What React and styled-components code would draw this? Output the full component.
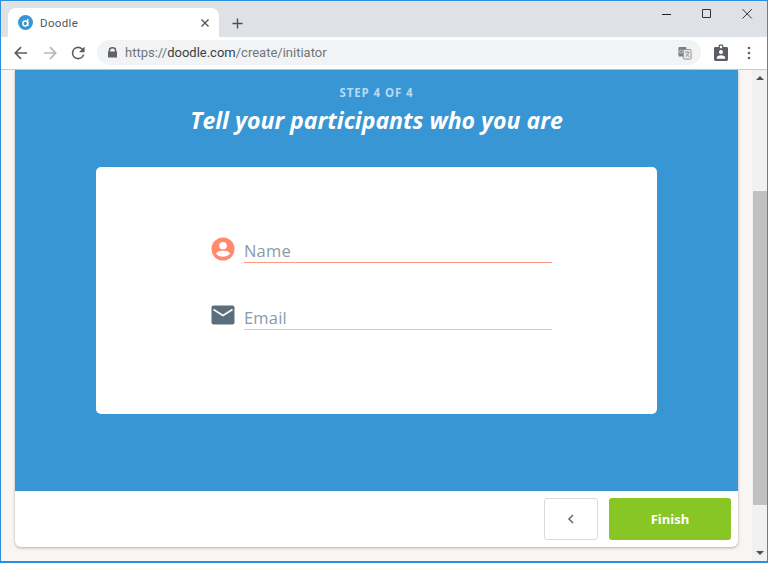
import React from 'react';
import styled, { createGlobalStyle } from 'styled-components';

const Global = createGlobalStyle`
  html, body { margin: 0; padding: 0; height: 100%; overflow: hidden; }
  #root { height: 100%; }
  * { box-sizing: border-box; }
`;

const Win = styled.div`
  width: 768px; height: 563px; display: flex; flex-direction: column;
  border: 1px solid #2b8fdc; border-bottom-width: 2px;
  background: #f8f5f3; font-family: "Open Sans", "Liberation Sans", sans-serif;
`;
const TabStrip = styled.div`
  height: 36px; flex: none; background: #dee1e6; display: flex; align-items: flex-end; padding-left: 7px;
`;
const Tab = styled.div`
  width: 211px; height: 29px; background: #fff; border-radius: 8px 8px 0 0;
  display: flex; align-items: center; padding: 0 9px 0 10px; gap: 7px;
`;
const TabTitle = styled.span`
  flex: 1; font: 11.5px "Roboto", "Liberation Sans", sans-serif; color: #555; letter-spacing: .35px;
`;
const NewTab = styled.button`
  all: unset; display: flex; margin: 0 0 3px 13px; height: 22px; align-items: center;
`;
const WinControls = styled.div`
  margin-left: auto; align-self: flex-start; display: flex; align-items: center; height: 25px; padding-right: 10px; gap: 20px;
`;
const Toolbar = styled.div`
  height: 33px; flex: none; background: #fff; border-bottom: 1px solid #c8cacc;
  display: flex; align-items: center; padding: 0 0 1px 12px;
`;
const NavIcons = styled.div`
  display: flex; gap: 13px; align-items: center; margin-right: 10px;
`;
const Omnibox = styled.div`
  width: 604px; height: 25px; background: #f1f3f4; border-radius: 13px; display: flex; align-items: center; padding: 0 9px 0 11px;
`;
const Url = styled.span`
  flex: 1; margin-left: 8px; font: 13px "Roboto", "Liberation Sans", sans-serif; color: #70757a;
  b { font-weight: 400; color: #3c4043; }
`;
const Actions = styled.div`
  display: flex; align-items: center; gap: 19px; margin-left: 13px;
`;
const Body = styled.div`
  flex: 1; display: flex; min-height: 0;
`;
const Page = styled.div`
  flex: 1; padding: 0 14px 14px; display: flex; min-width: 0;
`;
const Card = styled.div`
  flex: 1; display: flex; flex-direction: column; border-radius: 0 0 6px 6px; background: #fff;
  box-shadow: 0 1px 3px rgba(0,0,0,.3);
`;
const Hero = styled.div`
  height: 421px; flex: none; background: #3896d5; display: flex; flex-direction: column; align-items: center; padding-top: 15px;
`;
const Step = styled.div`
  font-size: 11.5px; line-height: 15px; font-weight: 700; letter-spacing: .9px; color: #b8daf2;
`;
const Title = styled.h1`
  margin: 5px 0 0; font-size: 23.1px; line-height: 30px; font-weight: 700; font-style: italic; color: #fff;
`;
const FormCard = styled.div`
  width: 561px; height: 247px; margin-top: 32px; background: #fff; border-radius: 5px;
  display: flex; flex-direction: column; gap: 34px; padding: 63px 105px 0 115px;
`;
const Field = styled.div`
  display: flex; align-items: flex-start; gap: 9px; height: 33px;
`;
const IconBox = styled.div`
  width: 24px; height: 24px; flex: none; display: flex; align-items: center; justify-content: center;
  margin-top: ${p => p.$offset}px;
`;
const Input = styled.div`
  flex: 1; height: 33px; border-bottom: 1px solid ${p => (p.$active ? '#ff9a7e' : '#c9d0d8')};
  font-size: 16.5px; line-height: 22px; color: #8a9aa8; letter-spacing: .2px; display: flex; align-items: flex-end;
`;
const Footer = styled.div`
  flex: 1; display: flex; justify-content: flex-end; align-items: flex-start; padding: 7px 7px 0 0; gap: 11px;
`;
const BackBtn = styled.button`
  width: 54px; height: 42px; background: #fff; border: 1px solid #d5dbe1; border-radius: 3px; display: flex; align-items: center; justify-content: center; padding: 0;
`;
const FinishBtn = styled.button`
  width: 122px; height: 42px; background: #88c625; border: 0; border-radius: 3px; color: #fff; font: 700 13px "Open Sans", sans-serif; padding: 0;
`;
const Scrollbar = styled.div`
  width: 15px; flex: none; background: #f1f1f1; display: flex; flex-direction: column; align-items: center;
`;
const Arrow = styled.div`
  width: 0; height: 0; border-left: 4px solid transparent; border-right: 4px solid transparent;
  ${p => (p.$down ? 'border-top: 4px solid #505050;' : 'border-bottom: 4px solid #505050;')}
  margin: ${p => (p.$down ? '0 0 6px' : '6px 0 0')};
`;
const Thumb = styled.div`
  width: 14px; height: 314px; background: #c1c1c1; margin: 111px 0 auto 1px;
`;

const Back = () => <svg width="16" height="16" viewBox="0 0 16 16" fill="none" stroke="#5a5e62" strokeWidth="1.7"><path d="M14 8H2.5M8 2.2 2.3 8 8 13.8" /></svg>;
const Fwd = () => <svg width="16" height="16" viewBox="0 0 16 16" fill="none" stroke="#b5b8bb" strokeWidth="1.7"><path d="M2 8h11.5M8 2.2 13.700 8 8 13.800" /></svg>;
const Reload = () => <svg width="16" height="16" viewBox="3 2 20 20" fill="#5a5e62"><path d="M17.650 6.350A7.960 7.960 0 0 0 12 4a8 8 0 1 0 7.730 10h-2.080A6 6 0 1 1 12 6c1.660 0 3.140.690 4.220 1.780L13 11h7V4l-2.350 2.350z" /></svg>;

export default function App() {
  return (
    <Win>
      <Global />
      <TabStrip>
        <Tab>
          <svg width="15" height="15" viewBox="0 0 15 15"><circle cx="7.500" cy="7.500" r="7.500" fill="#3896d5" /><circle cx="7.300" cy="8.500" r="2.400" fill="none" stroke="#fff" strokeWidth="1.500" /><path d="M9.700 4v7" stroke="#fff" strokeWidth="1.500" /></svg>
          <TabTitle>Doodle</TabTitle>
          <svg width="10" height="10" viewBox="0 0 10 10" stroke="#555" strokeWidth="1.400"><path d="M1.500 1.500l7 7M8.500 1.500l-7 7" /></svg>
        </Tab>
        <NewTab>
          <svg width="11" height="11" viewBox="0 0 12 12" stroke="#4a4d50" strokeWidth="1.500"><path d="M6 .5v11M.5 6h11" /></svg>
        </NewTab>
        <WinControls>
          <svg width="20" height="10" viewBox="0 0 20 10" stroke="#222" strokeWidth="1"><path d="M5 5.500h9" /></svg>
          <svg width="20" height="10" viewBox="0 0 20 10" fill="none" stroke="#333" strokeWidth="1"><path d="M5.500.500h8v8h-8z" /></svg>
          <svg width="20" height="10" viewBox="0 0 20 10" fill="none" stroke="#333" strokeWidth="1"><path d="M5.500.2l9.300 9.300M14.800.2 5.500 9.500" /></svg>
        </WinControls>
      </TabStrip>
      <Toolbar>
        <NavIcons><Back /><Fwd /><Reload /></NavIcons>
        <Omnibox>
          <svg width="9" height="11" viewBox="1.400 0 8.200 12" fill="#5f6368" preserveAspectRatio="none"><path d="M2 5V3.600a3.500 3.500 0 0 1 7 0V5h.6v6.500H1.400V5H2zm1.400 0h4.200V3.600a2.100 2.100 0 0 0-4.200 0V5z" /></svg>
          <Url>https://<b>doodle.com</b>/create/initiator</Url>
          <svg width="14" height="14" viewBox="0 0 16 16"><rect x="0.500" y="1" width="9" height="11" rx="1" fill="#7b7f83" /><rect x="6" y="4" width="9" height="11" rx="1" fill="#e6e7e8" stroke="#8b8e91" /><path d="M8 7h5M10.500 6v1M9 12c2-1 3-3 3.300-5M9.500 8.500c.6 1.500 2 3 3.600 3.500" stroke="#7b7f83" fill="none" strokeWidth=".8" /><circle cx="3.600" cy="6.400" r="1.800" fill="none" stroke="#ddd" strokeWidth=".9" /></svg>
        </Omnibox>
        <Actions>
          <svg width="14" height="17" viewBox="0 0 15 18" fill="#5a5e62"><path d="M1.500 3H5V1.500A1 1 0 0 1 6 .5h3a1 1 0 0 1 1 1V3h3.500A1.500 1.500 0 0 1 15 4.500v12a1.500 1.500 0 0 1-1.500 1.500h-12A1.500 1.500 0 0 1 0 16.500v-12A1.500 1.500 0 0 1 1.500 3z" /><rect x="6.300" y="1.800" width="2.400" height="2.600" fill="#fff" /><circle cx="7.500" cy="8.500" r="2.200" fill="#fff" /><path d="M3 15c0-2 2-3 4.500-3s4.500 1 4.500 3v.6H3z" fill="#fff" /></svg>
          <svg width="4" height="14" viewBox="0 0 4 14" fill="#5f6368"><circle cx="2" cy="2" r="1.300" /><circle cx="2" cy="7" r="1.300" /><circle cx="2" cy="12" r="1.300" /></svg>
        </Actions>
      </Toolbar>
      <Body>
        <Page>
          <Card>
            <Hero>
              <Step>STEP 4 OF 4</Step>
              <Title>Tell your participants who you are</Title>
              <FormCard>
                <Field>
                  <IconBox $offset={7}>
                    <svg width="24" height="24" viewBox="0 0 24 24"><circle cx="12" cy="12" r="11.500" fill="#ff8a70" /><circle cx="12" cy="8.800" r="3.800" fill="#fff" /><path d="M5 16.500C6 14.500 9 13.800 12 13.800s6 .7 7 2.700c-1.500 2-4 3.300-7 3.300s-5.500-1.300-7-3.300z" fill="#fff" /></svg>
                  </IconBox>
                  <Input $active>Name</Input>
                </Field>
                <Field>
                  <IconBox $offset={6}>
                    <svg width="24" height="20" viewBox="0 0 24 20"><rect x="0.500" y="0.500" width="23" height="19" rx="2" fill="#5c6e7c" /><path d="M2.500 4.500 12 10.500l9.500-6" fill="none" stroke="#fff" strokeWidth="1.500" /></svg>
                  </IconBox>
                  <Input>Email</Input>
                </Field>
              </FormCard>
            </Hero>
            <Footer>
              <BackBtn>
                <svg width="8" height="10" viewBox="0 0 8 10" fill="none" stroke="#5c6e7c" strokeWidth="1.600"><path d="M6 1 2 5l4 4" /></svg>
              </BackBtn>
              <FinishBtn>Finish</FinishBtn>
            </Footer>
          </Card>
        </Page>
        <Scrollbar>
          <Arrow />
          <Thumb />
          <Arrow $down />
        </Scrollbar>
      </Body>
    </Win>
  );
}
